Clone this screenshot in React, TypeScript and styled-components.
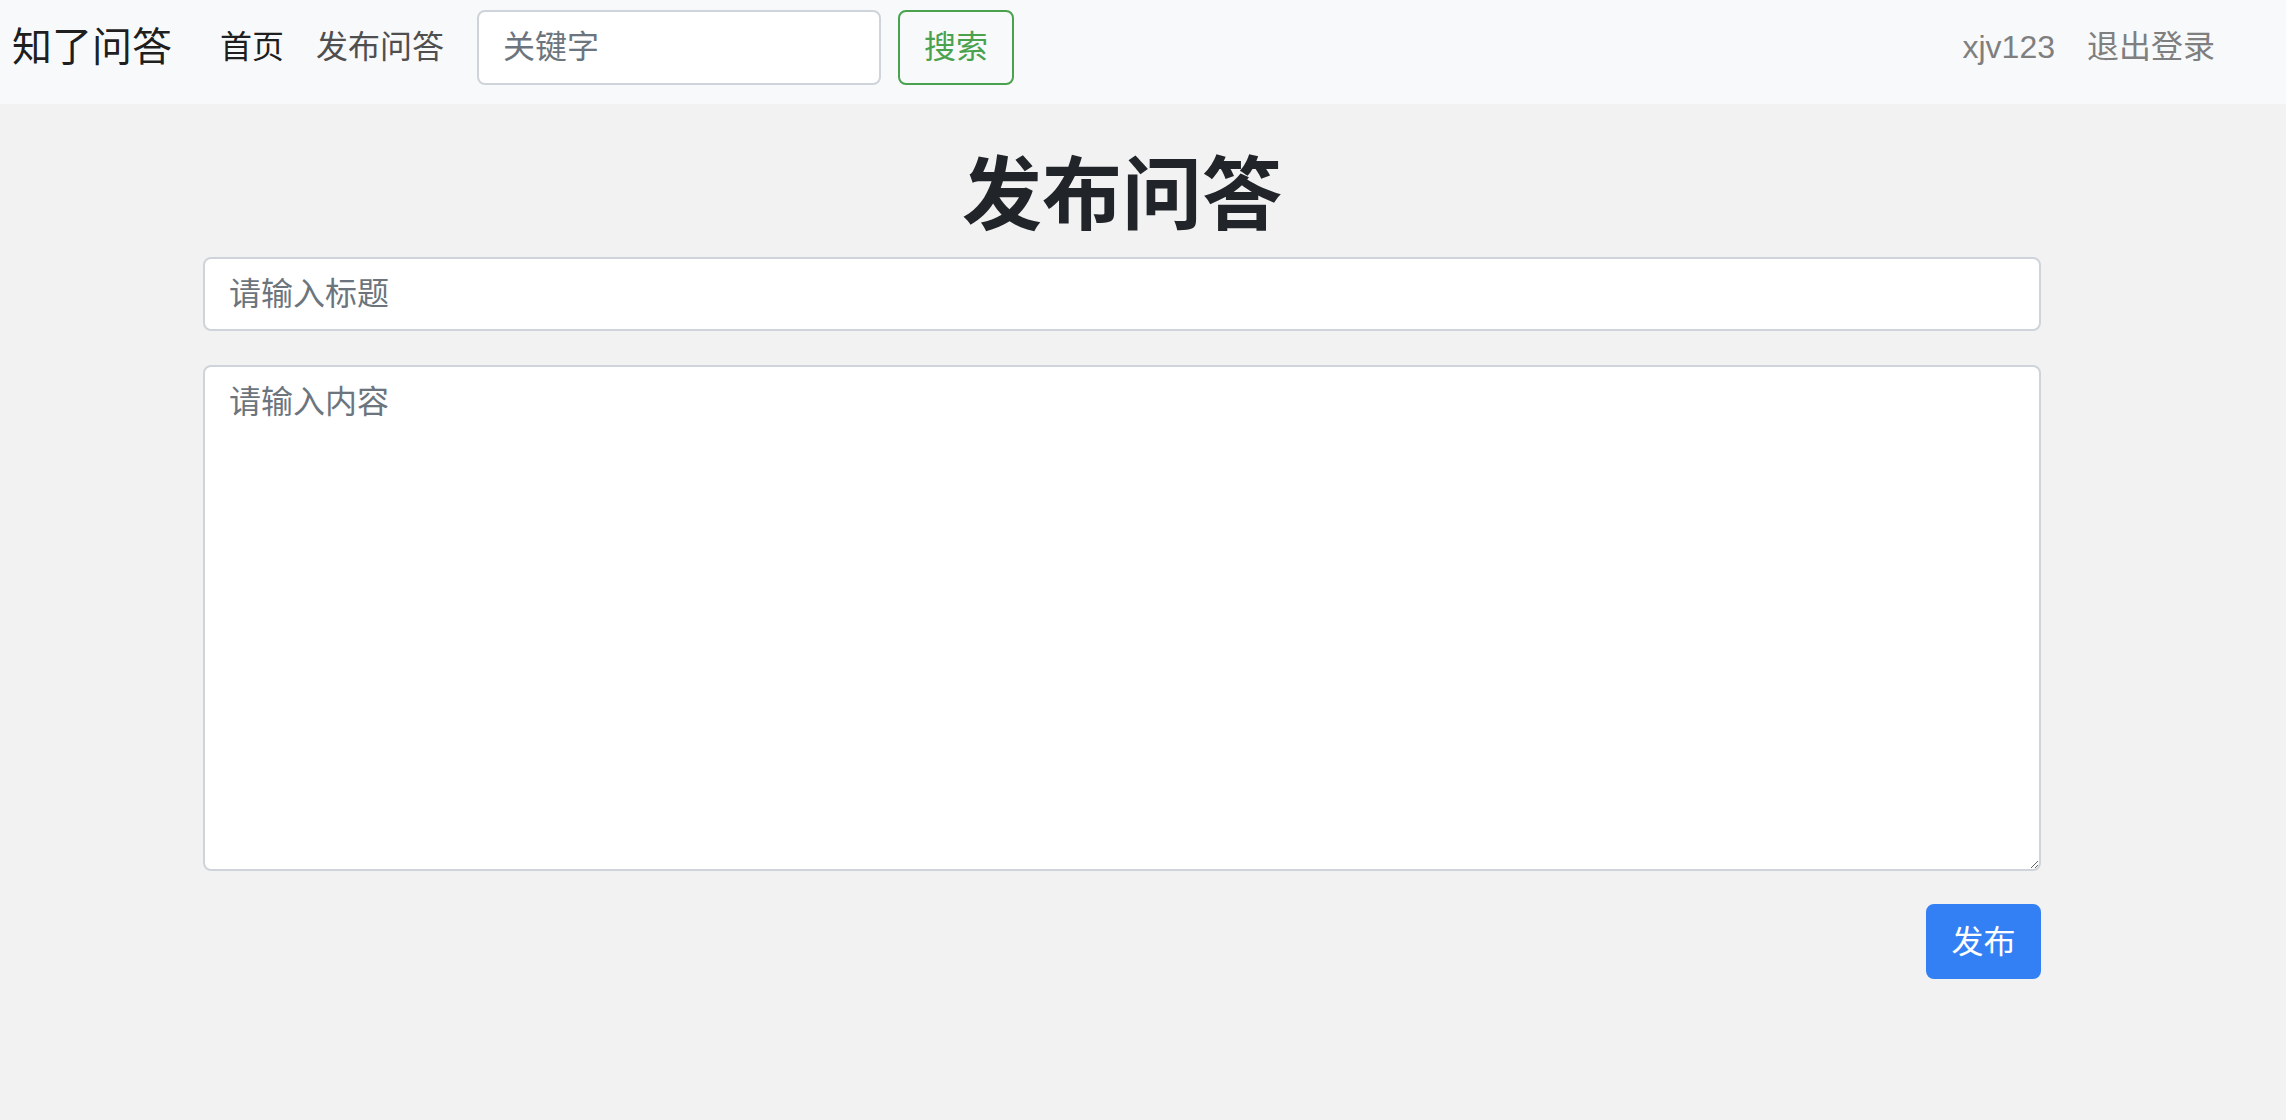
import styled, { createGlobalStyle } from "styled-components";

const GlobalStyle = createGlobalStyle`
  * {
    box-sizing: border-box;
  }
  body {
    margin: 0;
    background: #f2f2f2;
    font-family: "Liberation Sans", "Noto Sans CJK SC", sans-serif;
    color: #212529;
  }
`;

const NavBar = styled.nav`
  height: 104px;
  background: #f8f9fa;
  display: flex;
  align-items: center;
  padding: 0 55px 10px 12px;
`;

const Brand = styled.a`
  font-size: 40px;
  line-height: 60px;
  color: rgba(0, 0, 0, 0.9);
  margin-right: 32px;
  text-decoration: none;
  white-space: nowrap;
`;

const NavList = styled.ul`
  display: flex;
  align-items: center;
  list-style: none;
  margin: 0;
  padding: 0;
`;

const NavLink = styled.a<{ $tone: "active" | "normal" | "muted" }>`
  display: block;
  padding: 16px;
  font-size: 32px;
  line-height: 48px;
  text-decoration: none;
  white-space: nowrap;
  color: ${(p) =>
    p.$tone === "active" ? "rgba(0,0,0,0.9)" : p.$tone === "normal" ? "#4f4f4f" : "#7f7f7f"};
`;

const SearchForm = styled.form`
  display: flex;
  align-items: center;
  gap: 17px;
  margin-left: 17px;
`;

const SearchInput = styled.input`
  width: 404px;
  height: 75px;
  padding: 11px 24px;
  font-size: 32px;
  line-height: 48px;
  font-family: inherit;
  border: 2px solid #ced4da;
  border-radius: 8px;
  background: #fff;
  color: #495057;
  &::placeholder {
    color: #6c757d;
  }
  &:focus {
    outline: none;
  }
`;

const OutlineButton = styled.button`
  height: 75px;
  width: 116px;
  padding: 11px 0;
  font-size: 32px;
  line-height: 48px;
  font-family: inherit;
  background: transparent;
  color: #4aa24e;
  border: 2px solid #4aa24e;
  border-radius: 8px;
  cursor: pointer;
`;

const Spacer = styled.div`
  flex: 1;
`;

const Main = styled.main`
  width: 1838px;
  margin-left: 203px;
  padding-top: 44px;
`;

const Title = styled.h1`
  margin: 0 0 13px;
  text-align: center;
  font-size: 80px;
  line-height: 96px;
  font-weight: 700;
  color: #212529;
`;

const Field = styled.input`
  display: block;
  width: 100%;
  height: 74px;
  padding: 11px 24px;
  font-size: 32px;
  line-height: 48px;
  font-family: inherit;
  border: 2px solid #ced4da;
  border-radius: 8px;
  background: #fff;
  margin-bottom: 34px;
  &::placeholder {
    color: #6c757d;
  }
  &:focus {
    outline: none;
  }
`;

const TextArea = styled.textarea`
  display: block;
  width: 100%;
  height: 506px;
  padding: 11px 24px;
  font-size: 32px;
  line-height: 48px;
  font-family: inherit;
  border: 2px solid #ced4da;
  border-radius: 8px;
  background: #fff;
  resize: vertical;
  &::placeholder {
    color: #6c757d;
  }
  &:focus {
    outline: none;
  }
`;

const Actions = styled.div`
  display: flex;
  justify-content: flex-end;
  margin-top: 33px;
`;

const PrimaryButton = styled.button`
  height: 75px;
  width: 115px;
  font-size: 32px;
  line-height: 48px;
  font-family: inherit;
  color: #fff;
  background: #3380f5;
  border: 2px solid #3380f5;
  border-radius: 8px;
  cursor: pointer;
`;

export default function App() {
  return (
    <>
      <GlobalStyle />
      <NavBar>
        <Brand href="#">知了问答</Brand>
        <NavList>
          <li>
            <NavLink href="#" $tone="active">首页</NavLink>
          </li>
          <li>
            <NavLink href="#" $tone="normal">发布问答</NavLink>
          </li>
        </NavList>
        <SearchForm onSubmit={(e) => e.preventDefault()}>
          <SearchInput type="search" placeholder="关键字" />
          <OutlineButton type="submit">搜索</OutlineButton>
        </SearchForm>
        <Spacer />
        <NavList>
          <li>
            <NavLink href="#" $tone="muted">xjv123</NavLink>
          </li>
          <li>
            <NavLink href="#" $tone="muted">退出登录</NavLink>
          </li>
        </NavList>
      </NavBar>
      <Main>
        <Title>发布问答</Title>
        <form onSubmit={(e) => e.preventDefault()}>
          <Field type="text" placeholder="请输入标题" />
          <TextArea placeholder="请输入内容" />
          <Actions>
            <PrimaryButton type="submit">发布</PrimaryButton>
          </Actions>
        </form>
      </Main>
    </>
  );
}
